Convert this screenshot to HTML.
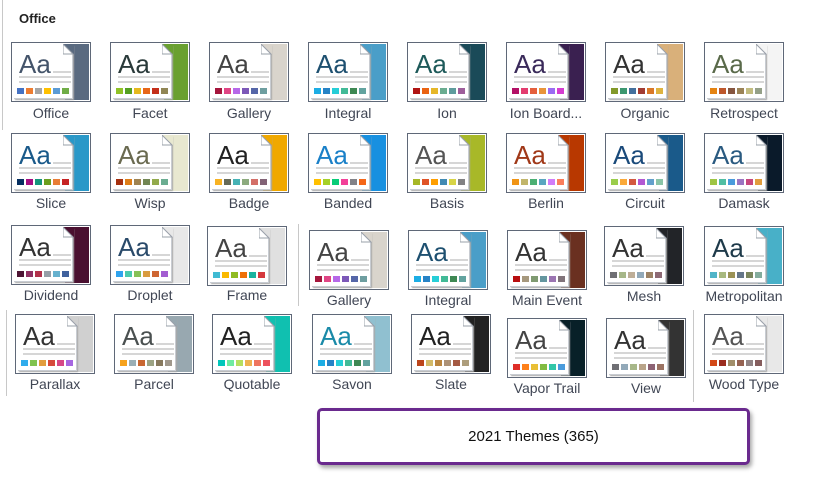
<!DOCTYPE html>
<html><head><meta charset="utf-8"><style>
body{margin:0;width:814px;height:497px;background:#fff;position:relative;overflow:hidden;font-family:"Liberation Sans",sans-serif}
.h{position:absolute;left:19px;top:11px;font-weight:bold;font-size:13px;color:#222}
.t{position:absolute;width:78px;height:58px;border:1px solid #5f6878;background:#fff;overflow:hidden}
.p{position:absolute;left:2px;top:2px;width:58px;height:53px;background:#fff;border-right:1px solid #c8ccd2;border-bottom:1px solid #c8ccd2;box-shadow:1px 1px 1px #aaa}
.pn{position:absolute;top:1px;right:1px;bottom:1px;width:24px}
.dog{position:absolute;right:-2px;top:-1px;width:11px;height:11px}
.aa{position:absolute;left:5px;top:4px;font-size:26px;line-height:30px}
.l{position:absolute;background:#d6d6d6;height:2px}
.s{position:absolute;top:43px;width:7px;height:6px}
.lb{position:absolute;width:100px;text-align:center;font-size:14px;color:#404654}
.v{position:absolute;width:1px;background:#c8c8c8}
.box{position:absolute;left:317px;top:408px;width:427px;height:51px;border:3px solid #6a2a8e;border-radius:5px;box-shadow:2px 3px 4px rgba(0,0,0,.35);text-align:center;line-height:51px;font-size:15px;color:#111;background:#fff}
</style></head><body>
<div class="v" style="left:2px;top:0;height:130px"></div>
<div class="v" style="left:298px;top:224px;height:82px"></div>
<div class="v" style="left:6px;top:310px;height:86px"></div>
<div class="v" style="left:693px;top:310px;height:92px"></div>
<div class="h">Office</div>
<div id="g"></div>
<div class="box">2021 Themes (365)</div>
<script>
var T=[
["Office",11,42,113,"#5a6a80","#44546a",["#4472c4","#ed7d31","#a5a5a5","#ffc000","#5b9bd5","#70ad47"],""],
["Facet",110,42,113,"#6aa030","#2a3a3a",["#90c226","#54a021","#e6b91e","#e76618","#c42f1a","#918655"],""],
["Gallery",209,42,113,"#d9d4cc","#444",["#a5163c","#e04685","#b668e8","#7c58b8","#5566a8","#6e9ea0"],""],
["Integral",308,42,113,"#4a9ec8","#1e5070",["#1cade4","#2683c6","#27ced7","#42ba97","#3e8853","#62a39f"],"Liberation Sans Narrow"],
["Ion",407,42,113,"#1a4a58","#1e5a5a",["#b01513","#ea6312","#e6b729","#6aac90","#5f9c9d","#9e5e9b"],""],
["Ion Board...",506,42,113,"#3a2050","#3a2a5a",["#b31166","#e33d6f","#e45f3c","#e9943a","#9b6bf2","#d53dd0"],""],
["Organic",605,42,113,"#d9b07a","#333",["#83992a","#3c9770","#44709d","#a23c33","#d97828","#deb340"],"Liberation Serif"],
["Retrospect",704,42,113,"#f4f4f4","#5a6a4a",["#e48312","#bd582c","#865640","#9b8357","#c2bc80","#94a088"],""],
["Slice",11,133,203,"#2a98c8","#1a5a8a",["#052f61","#a50e82","#14967c","#6a9e1f","#e87d37","#c62324"],""],
["Wisp",110,133,203,"#e8e8d0","#6a6a50",["#a53010","#de7e18","#9f8351","#728653","#92aa4c","#6aac91"],""],
["Badge",209,133,203,"#f0a800","#222",["#f8b323","#656a59","#46b2b5","#8caa7e","#d36f68","#826276"],""],
["Banded",308,133,203,"#1890e0","#1a80c8",["#ffc000","#a5d028","#08cc78","#f24099","#828288","#f56617"],""],
["Basis",407,133,203,"#a8b828","#555",["#a6b727","#df5327","#fe9e00","#418ab3","#d7d447","#818183"],""],
["Berlin",506,133,203,"#b83800","#a03818",["#f09415","#c1b56b","#4baf73","#5aa6c0","#d17df9","#fa7e5c"],""],
["Circuit",605,133,203,"#1a5a8a","#1a4a7a",["#9acd4c","#faa93a","#d35940","#b258d3","#63a0cc","#8ac4a7"],""],
["Damask",704,133,203,"#0a1a2a","#2a5a80",["#9ec544","#50bea3","#4a9bdc","#9b75c2","#c7487e","#e19d3d"],"Liberation Serif"],
["Dividend",11,225,295,"#4a1030","#333",["#4d1434","#903163","#b2324b","#969fa7","#66b1ce","#40619d"],""],
["Droplet",110,225,295,"#e8e8e8","#2a4a6a",["#2fa3ee","#4bcaad","#86c157","#d99c3f","#ce6633","#a35dd1"],""],
["Frame",207,226,295,"#e0e0e0","#444",["#40bad2","#fab900","#90bb23","#ee7008","#1ab39f","#d5393d"],""],
["Gallery",309,230,300,"#d9d4cc","#444",["#a5163c","#e04685","#b668e8","#7c58b8","#5566a8","#6e9ea0"],""],
["Integral",408,230,300,"#4a9ec8","#1e5070",["#1cade4","#2683c6","#27ced7","#42ba97","#3e8853","#62a39f"],""],
["Main Event",507,230,300,"#6a3020","#333",["#b80e0f","#a6987d","#7f9a71","#64969f","#9b75b2","#80737a"],""],
["Mesh",604,226,296,"#222428","#333",["#6f6f74","#a7b789","#beae98","#92a9b9","#9c8265","#8d6974"],""],
["Metropolitan",704,226,296,"#48b0c8","#1e3a4a",["#50b4c8","#a8b97f","#9b9256","#657689","#7a855d","#84ac9d"],""],
["Parallax",15,314,384,"#d0d0d0","#333",["#30acec","#80c34f","#e29d3e","#d64a3b","#d64787","#a666e1"],""],
["Parcel",114,314,384,"#98a8b0","#4a5050",["#f6a21d","#9bafb5","#c96731","#9ca383","#87795d","#a0988c"],""],
["Quotable",212,314,384,"#10c0b0","#222",["#00c6bb","#6feba0","#b6df5e","#efb251","#ef755f","#ed515c"],""],
["Savon",312,314,384,"#90c0d0","#1a8aa8",["#1cade4","#2683c6","#27ced7","#42ba97","#3e8853","#62a39f"],""],
["Slate",411,314,384,"#222","#222",["#bc451b","#d3ba68","#bb8640","#ad9277","#a55a43","#ad9d7b"],"Liberation Serif"],
["Vapor Trail",507,318,388,"#082028","#444",["#df2e28","#fe801a","#e9bf35","#81bb42","#32c7a9","#4a9bdc"],""],
["View",606,318,388,"#333","#333",["#6f6f74","#92a9b9","#a7b789","#b9a489","#8d6374","#9b7362"],"Liberation Serif"],
["Wood Type",704,314,384,"#e8e8e8","#555",["#d34817","#9b2d1f","#a28e6a","#956251","#918485","#855d5d"],"Liberation Mono"]
];
var h="";
T.forEach(function(t){
var f=t[7]?'font-family:"'+t[7]+'",sans-serif;':'';
var s="";for(var i=0;i<6;i++)s+='<div class="s" style="left:'+(3+i*9)+'px;background:'+t[6][i]+'"></div>';
var dog='<svg class="dog" viewBox="0 0 11 11"><polygon points="0,0 11,0 11,11" fill="'+t[4]+'"/><polygon points="0,0 0,10 10,10" fill="#fff" stroke="#9aa0aa" stroke-width="1"/></svg>';
h+='<div class="t" style="left:'+t[1]+'px;top:'+t[2]+'px"><div class="pn" style="background:'+t[4]+'"></div><div class="p">'+dog+'<div class="aa" style="color:'+t[5]+';'+f+'">Aa</div><div class="l" style="left:39px;top:26px;width:18px"></div><div class="l" style="left:5px;top:31px;width:52px"></div><div class="l" style="left:5px;top:36px;width:52px"></div>'+s+'</div></div>';
h+='<div class="lb" style="left:'+(t[1]-10)+'px;top:'+(t[3]-8)+'px">'+t[0]+'</div>';
});
document.getElementById("g").innerHTML=h;
</script>
</body></html>
